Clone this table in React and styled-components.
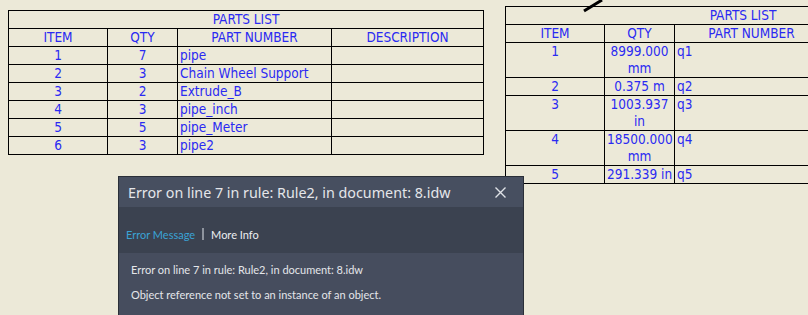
import React from 'react';
import styled, { createGlobalStyle } from 'styled-components';

const GlobalStyle = createGlobalStyle`
    html, body {
        margin: 0;
        padding: 0;
        background: #ece9d8;
    }
`;

const Sheet = styled.div`
    position: relative;
    display: flex;
    align-items: flex-start;
    gap: 21px;
    height: 315px;
    padding-left: 8px;
    overflow: hidden;
    font-family: Tahoma, "DejaVu Sans Condensed", "Liberation Sans", sans-serif;
`;

const PartsTable = styled.div`
    flex-shrink: 0;
    display: grid;
    grid-template-columns: 99px 70px 154px 152px;
    margin-top: ${(p) => p.$top}px;
    border-top: 1px solid #000;
    border-left: 1px solid #000;
    color: #2a2af2;
    font-size: 13.5px;
`;

const Cell = styled.div`
    box-sizing: border-box;
    min-height: 18px;
    border-right: 1px solid #000;
    border-bottom: 1px solid #000;
    line-height: 17px;
    padding: 0 2px;
    text-align: ${(p) => p.$align || 'center'};
    white-space: nowrap;
`;

const TitleCell = styled(Cell)`
    grid-column: 1 / -1;
`;

const Leader = styled.svg`
    position: absolute;
    left: 583px;
    top: 0;
`;

const Dialog = styled.div`
    position: absolute;
    left: 118px;
    top: 176px;
    width: 406px;
    height: 150px;
    box-sizing: border-box;
    border: 1px solid #2a2f38;
    background: #464d5e;
    font-family: Lato, "Noto Sans", sans-serif;
    color: #e4e6ea;
`;

const DialogHead = styled.div`
    display: flex;
    align-items: center;
    justify-content: space-between;
    height: 30px;
    padding: 0 17px 0 9px;
    background: #474f60;
    font-family: "Noto Sans", Lato, sans-serif;
    font-size: 14.3px;
`;

const CloseButton = styled.button`
    display: flex;
    padding: 0;
    border: 0;
    background: none;
    cursor: pointer;
`;

const TabBar = styled.div`
    display: flex;
    align-items: center;
    gap: 7px;
    height: 46px;
    padding: 8px 0 0 7px;
    box-sizing: border-box;
    background: #3b4250;
    font-size: 11px;
`;

const Tab = styled.span`
    color: ${(p) => (p.$active ? '#3aa3d6' : '#eceef1')};
`;

const TabDivider = styled.span`
    width: 2px;
    height: 12px;
    background: #8e949e;
`;

const DialogBody = styled.div`
    display: flex;
    flex-direction: column;
    gap: 8px;
    padding: 8px 12px;
    font-size: 11px;
    line-height: 17px;
`;

const leftRows = [
    ['1', '7', 'pipe'],
    ['2', '3', 'Chain Wheel Support'],
    ['3', '2', 'Extrude_B'],
    ['4', '3', 'pipe_inch'],
    ['5', '5', 'pipe_Meter'],
    ['6', '3', 'pipe2'],
];

const rightRows = [
    ['1', ['8999.000', 'mm'], 'q1'],
    ['2', ['0.375 m'], 'q2'],
    ['3', ['1003.937', 'in'], 'q3'],
    ['4', ['18500.000', 'mm'], 'q4'],
    ['5', ['291.339 in'], 'q5'],
];

const Header = () => (
    <>
        <TitleCell>PARTS LIST</TitleCell>
        <Cell>ITEM</Cell>
        <Cell>QTY</Cell>
        <Cell>PART NUMBER</Cell>
        <Cell>DESCRIPTION</Cell>
    </>
);

const App = () => (
    <>
        <GlobalStyle />
        <Sheet>
            <PartsTable $top={10}>
                <Header />
                {leftRows.map(([item, qty, part]) => (
                    <React.Fragment key={item}>
                        <Cell>{item}</Cell>
                        <Cell>{qty}</Cell>
                        <Cell $align="left">{part}</Cell>
                        <Cell />
                    </React.Fragment>
                ))}
            </PartsTable>

            <PartsTable $top={6}>
                <Header />
                {rightRows.map(([item, qty, part]) => (
                    <React.Fragment key={item}>
                        <Cell>{item}</Cell>
                        <Cell>
                            {qty.map((line) => (
                                <div key={line}>{line}</div>
                            ))}
                        </Cell>
                        <Cell $align="left">{part}</Cell>
                        <Cell />
                    </React.Fragment>
                ))}
            </PartsTable>

            <Leader width="22" height="14" viewBox="0 0 22 14">
                <line x1="1" y1="11" x2="19" y2="0" stroke="#000" strokeWidth="3" />
            </Leader>

            <Dialog>
                <DialogHead>
                    Error on line 7 in rule: Rule2, in document: 8.idw
                    <CloseButton>
                        <svg width="11" height="11" viewBox="0 0 11 11">
                            <path d="M0.5 0.5 L10.5 10.5 M10.5 0.5 L0.5 10.5" stroke="#dfe2e7" strokeWidth="1.4" />
                        </svg>
                    </CloseButton>
                </DialogHead>
                <TabBar>
                    <Tab $active>Error Message</Tab>
                    <TabDivider />
                    <Tab>More Info</Tab>
                </TabBar>
                <DialogBody>
                    <div>Error on line 7 in rule: Rule2, in document: 8.idw</div>
                    <div>Object reference not set to an instance of an object.</div>
                </DialogBody>
            </Dialog>
        </Sheet>
    </>
);

export default App;
